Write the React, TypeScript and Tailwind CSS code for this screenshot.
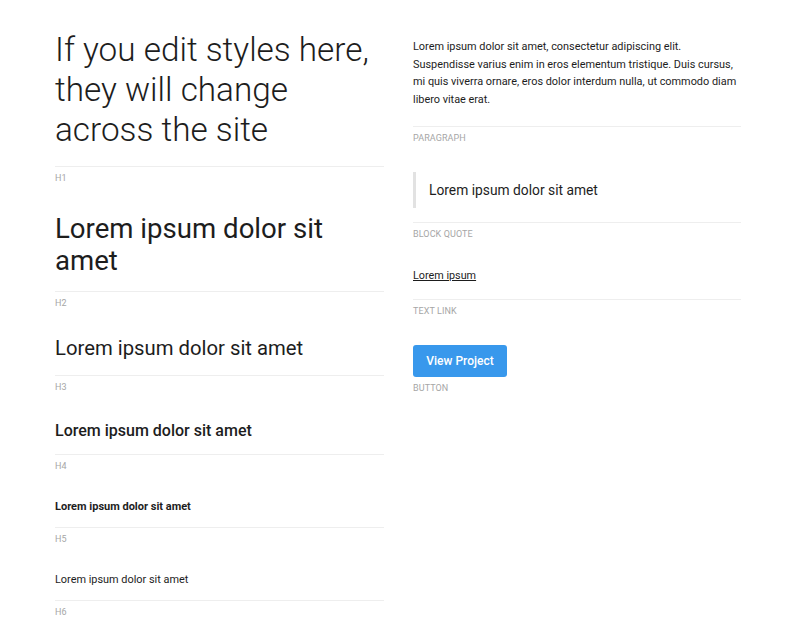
const Label = ({ children }: { children: React.ReactNode }) => (
  <div className="border-t border-[#eeeeee] pt-[5px] text-[9px] leading-[12px] tracking-[0.1px] uppercase text-[#a6a6a6]">
    {children}
  </div>
);

export default function App() {
  return (
    <div className="min-h-[630px] bg-white font-['Roboto',sans-serif] text-[#1d1d1d]">
      <div className="flex gap-[29px] pl-[55px] pt-[30px]">
        {/* left column: headings */}
        <div className="w-[329px] shrink-0">
          <h1 className="mb-[16px] text-[33.3px] font-light leading-[40px]">
            If you edit styles here, they will change across the site
          </h1>
          <Label>H1</Label>

          <h2 className="mt-[29px] mb-[14px] text-[27.6px] font-normal leading-[32px]">
            Lorem ipsum dolor sit amet
          </h2>
          <Label>H2</Label>

          <h3 className="mt-[25px] mb-[13px] text-[20.3px] font-normal leading-[28px]">
            Lorem ipsum dolor sit amet
          </h3>
          <Label>H3</Label>

          <h4 className="mt-[27px] mb-[12px] text-[16px] font-medium leading-[22px]">
            Lorem ipsum dolor sit amet
          </h4>
          <Label>H4</Label>

          <h5 className="mt-[26px] mb-[11px] text-[11px] font-bold leading-[18px]">
            Lorem ipsum dolor sit amet
          </h5>
          <Label>H5</Label>

          <h6 className="mt-[26px] mb-[11px] text-[10.9px] font-normal leading-[18px]">
            Lorem ipsum dolor sit amet
          </h6>
          <Label>H6</Label>
        </div>

        {/* right column */}
        <div className="w-[328px] shrink-0 pt-[8px]">
          <p className="mb-[17px] text-[10.9px] leading-[17.7px]">
            Lorem ipsum dolor sit amet, consectetur adipiscing elit. Suspendisse varius enim in eros
            elementum tristique. Duis cursus, mi quis viverra ornare, eros dolor interdum nulla, ut
            commodo diam libero vitae erat.
          </p>
          <Label>Paragraph</Label>

          <blockquote className="mt-[28px] mb-[14px] flex h-[36px] items-center border-l-[3px] border-[#e2e2e2] pl-[13px] text-[13.8px] leading-[20px]">
            Lorem ipsum dolor sit amet
          </blockquote>
          <Label>Block Quote</Label>

          <a href="#" className="mt-[27px] mb-[14px] block w-fit text-[10.8px] leading-[18px] text-[#1d1d1d] underline">
            Lorem ipsum
          </a>
          <Label>Text Link</Label>

          <button className="mt-[28px] mb-[5px] block h-[32px] w-[94px] rounded-[3px] bg-[#3898ec] text-[12px] font-medium text-white">
            View Project
          </button>
          <div className="text-[9px] leading-[12px] tracking-[0.1px] uppercase text-[#a6a6a6]">Button</div>
        </div>
      </div>
    </div>
  );
}
